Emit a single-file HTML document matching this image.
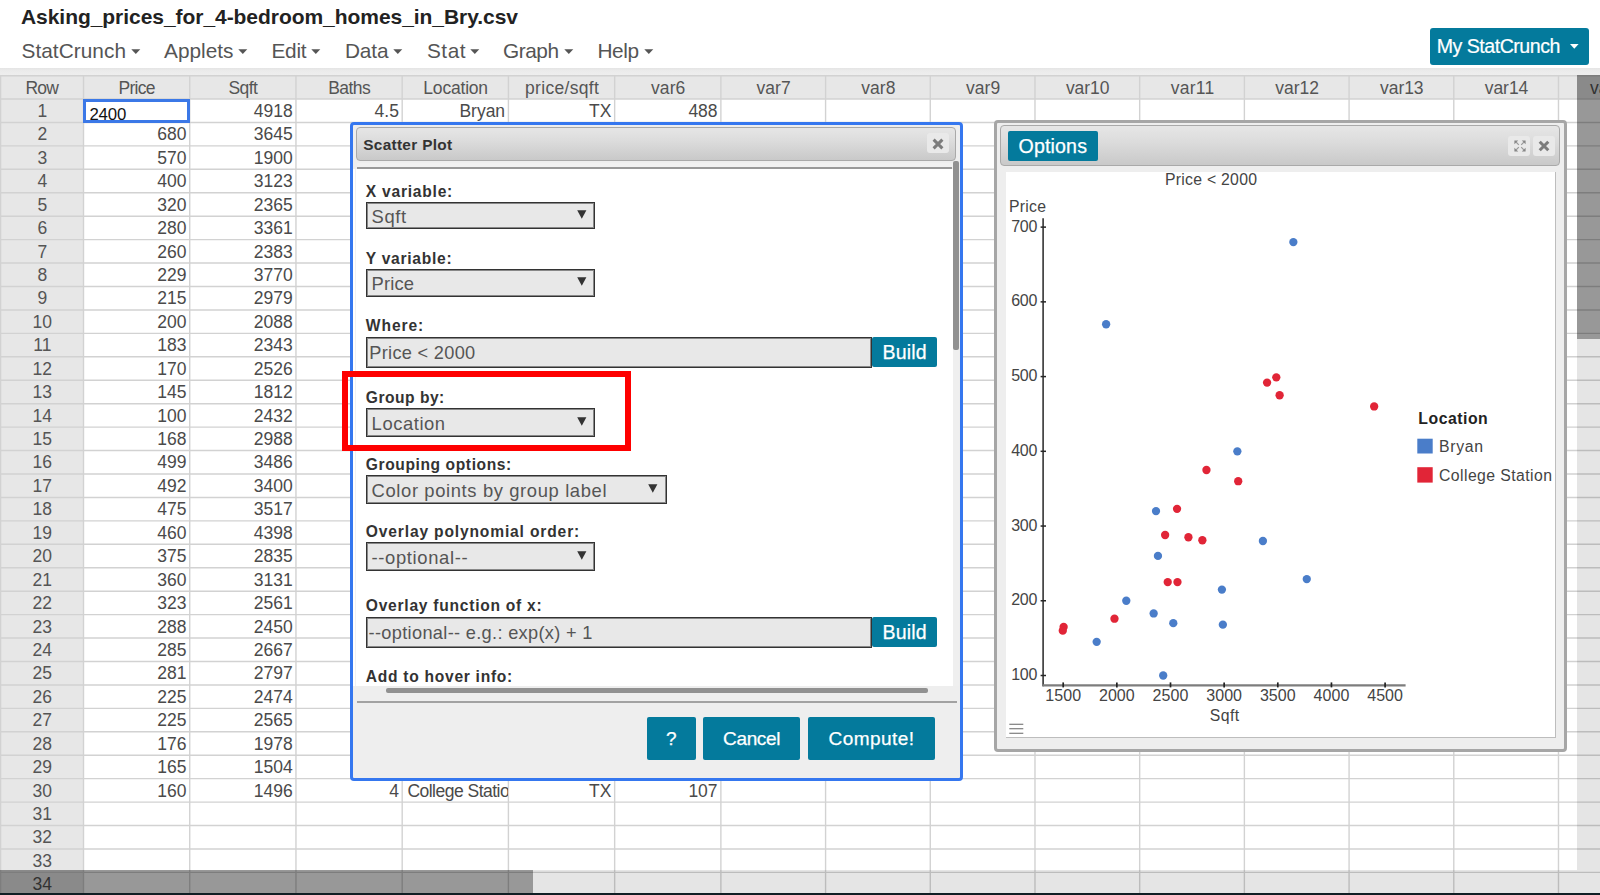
<!DOCTYPE html>
<html><head><meta charset="utf-8"><title>StatCrunch</title><style>
html,body{margin:0;padding:0;overflow:hidden;background:#fff}
body{width:1600px;height:895px;font-family:"Liberation Sans",sans-serif}
#root{position:relative;left:0;top:0;width:1600px;height:895px;overflow:hidden;background:#fff}
div{position:absolute;box-sizing:border-box}
.t{white-space:nowrap;line-height:1}
.a{position:absolute}
svg{position:absolute;overflow:visible}
</style></head><body><div id="root">
<div class="t" style="left:21.00px;top:6px;font-size:21.0px;color:#222;font-weight:bold;letter-spacing:-0.050px;">Asking_prices_for_4-bedroom_homes_in_Bry.csv</div>
<div class="t" style="left:21.50px;top:41px;font-size:20.8px;color:#555;letter-spacing:0.050px;">StatCrunch</div>
<svg class="a" style="left:131.00px;top:49.4px" width="10" height="6" viewBox="0 0 10 6"><path d="M0.3 0.3H9.3L4.8 5z" fill="#555"/></svg>
<div class="t" style="left:164.00px;top:41px;font-size:20.8px;color:#555;letter-spacing:0.022px;">Applets</div>
<svg class="a" style="left:238.00px;top:49.4px" width="10" height="6" viewBox="0 0 10 6"><path d="M0.3 0.3H9.3L4.8 5z" fill="#555"/></svg>
<div class="t" style="left:271.50px;top:41px;font-size:20.8px;color:#555;letter-spacing:-0.276px;">Edit</div>
<svg class="a" style="left:311.00px;top:49.4px" width="10" height="6" viewBox="0 0 10 6"><path d="M0.3 0.3H9.3L4.8 5z" fill="#555"/></svg>
<div class="t" style="left:345.00px;top:41px;font-size:20.8px;color:#555;letter-spacing:-0.147px;">Data</div>
<svg class="a" style="left:393.00px;top:49.4px" width="10" height="6" viewBox="0 0 10 6"><path d="M0.3 0.3H9.3L4.8 5z" fill="#555"/></svg>
<div class="t" style="left:427.00px;top:41px;font-size:20.8px;color:#555;letter-spacing:0.492px;">Stat</div>
<svg class="a" style="left:470.00px;top:49.4px" width="10" height="6" viewBox="0 0 10 6"><path d="M0.3 0.3H9.3L4.8 5z" fill="#555"/></svg>
<div class="t" style="left:503.00px;top:41px;font-size:20.8px;color:#555;letter-spacing:-0.456px;">Graph</div>
<svg class="a" style="left:563.50px;top:49.4px" width="10" height="6" viewBox="0 0 10 6"><path d="M0.3 0.3H9.3L4.8 5z" fill="#555"/></svg>
<div class="t" style="left:597.50px;top:41px;font-size:20.8px;color:#555;letter-spacing:-0.432px;">Help</div>
<svg class="a" style="left:644.00px;top:49.4px" width="10" height="6" viewBox="0 0 10 6"><path d="M0.3 0.3H9.3L4.8 5z" fill="#555"/></svg>
<div style="left:1430.00px;top:28.00px;width:158.50px;height:37.30px;background:#047a9c;border-radius:3px;"></div>
<div class="t" style="left:1436.70px;top:37px;font-size:19.6px;color:#fff;letter-spacing:-0.492px;-webkit-text-stroke:0.2px #fff;">My StatCrunch</div>
<svg class="a" style="left:1569.5px;top:44px" width="9" height="5" viewBox="0 0 9 5"><path d="M0 0H8.6L4.3 4.8z" fill="#fff"/></svg>
<div style="left:0.00px;top:68.40px;width:1600.00px;height:7.40px;background:linear-gradient(#e4e4e4,#ebebeb 35%,#efefef);"></div>
<div style="left:0.00px;top:75.70px;width:1600.00px;height:23.30px;background:#e7e7e7;"></div>
<div style="left:0.00px;top:99.00px;width:83.50px;height:796.00px;background:#e7e7e7;"></div>
<svg class="a" style="left:0;top:0" width="1600" height="895" viewBox="0 0 1600 895"><g stroke="#d2d2d2" stroke-width="1.4" fill="none"><path d="M0.6 75.70V895"/><path d="M83.50 75.70V895"/><path d="M189.73 75.70V895"/><path d="M295.96 75.70V895"/><path d="M402.19 75.70V895"/><path d="M508.42 75.70V895"/><path d="M614.65 75.70V895"/><path d="M720.88 75.70V895"/><path d="M825.58 75.70V895"/><path d="M930.28 75.70V895"/><path d="M1034.98 75.70V895"/><path d="M1139.68 75.70V895"/><path d="M1244.38 75.70V895"/><path d="M1349.08 75.70V895"/><path d="M1453.78 75.70V895"/><path d="M1558.48 75.70V895"/><path d="M0 75.70H1600"/><path d="M0 99.00H1600"/><path d="M0 122.44H1600"/><path d="M0 145.87H1600"/><path d="M0 169.31H1600"/><path d="M0 192.75H1600"/><path d="M0 216.19H1600"/><path d="M0 239.62H1600"/><path d="M0 263.06H1600"/><path d="M0 286.50H1600"/><path d="M0 309.93H1600"/><path d="M0 333.37H1600"/><path d="M0 356.81H1600"/><path d="M0 380.24H1600"/><path d="M0 403.68H1600"/><path d="M0 427.12H1600"/><path d="M0 450.56H1600"/><path d="M0 473.99H1600"/><path d="M0 497.43H1600"/><path d="M0 520.87H1600"/><path d="M0 544.30H1600"/><path d="M0 567.74H1600"/><path d="M0 591.18H1600"/><path d="M0 614.61H1600"/><path d="M0 638.05H1600"/><path d="M0 661.49H1600"/><path d="M0 684.93H1600"/><path d="M0 708.36H1600"/><path d="M0 731.80H1600"/><path d="M0 755.24H1600"/><path d="M0 778.67H1600"/><path d="M0 802.11H1600"/><path d="M0 825.55H1600"/><path d="M0 848.98H1600"/><path d="M0 872.42H1600"/><path d="M0 895.86H1600"/></g></svg>
<div class="t" style="left:25.40px;top:80px;font-size:17.5px;color:#555;letter-spacing:-0.772px;">Row</div>
<div class="t" style="left:118.52px;top:80px;font-size:17.5px;color:#555;letter-spacing:-0.714px;">Price</div>
<div class="t" style="left:228.50px;top:80px;font-size:17.5px;color:#555;letter-spacing:-0.550px;">Sqft</div>
<div class="t" style="left:328.23px;top:80px;font-size:17.5px;color:#555;letter-spacing:-0.564px;">Baths</div>
<div class="t" style="left:423.33px;top:80px;font-size:17.5px;color:#555;letter-spacing:-0.200px;">Location</div>
<div class="t" style="left:525.06px;top:80px;font-size:17.5px;color:#555;letter-spacing:0.305px;">price/sqft</div>
<div class="t" style="left:651.07px;top:80px;font-size:17.5px;color:#555;letter-spacing:0.054px;">var6</div>
<div class="t" style="left:756.53px;top:80px;font-size:17.5px;color:#555;letter-spacing:0.054px;">var7</div>
<div class="t" style="left:861.23px;top:80px;font-size:17.5px;color:#555;letter-spacing:0.054px;">var8</div>
<div class="t" style="left:965.93px;top:80px;font-size:17.5px;color:#555;letter-spacing:0.054px;">var9</div>
<div class="t" style="left:1065.93px;top:80px;font-size:17.5px;color:#555;letter-spacing:-0.048px;">var10</div>
<div class="t" style="left:1170.63px;top:80px;font-size:17.5px;color:#555;letter-spacing:0.280px;">var11</div>
<div class="t" style="left:1275.33px;top:80px;font-size:17.5px;color:#555;letter-spacing:-0.048px;">var12</div>
<div class="t" style="left:1380.03px;top:80px;font-size:17.5px;color:#555;letter-spacing:-0.048px;">var13</div>
<div class="t" style="left:1484.73px;top:80px;font-size:17.5px;color:#555;letter-spacing:-0.048px;">var14</div>
<div class="t" style="left:1590.00px;top:80px;font-size:17.5px;color:#555;letter-spacing:-0.048px;">var15</div>
<div class="t" style="left:37.44px;top:103px;font-size:17.5px;color:#555;">1</div>
<div class="t" style="left:37.44px;top:126px;font-size:17.5px;color:#555;">2</div>
<div class="t" style="left:37.44px;top:150px;font-size:17.5px;color:#555;">3</div>
<div class="t" style="left:37.44px;top:173px;font-size:17.5px;color:#555;">4</div>
<div class="t" style="left:37.44px;top:197px;font-size:17.5px;color:#555;">5</div>
<div class="t" style="left:37.44px;top:220px;font-size:17.5px;color:#555;">6</div>
<div class="t" style="left:37.44px;top:244px;font-size:17.5px;color:#555;">7</div>
<div class="t" style="left:37.44px;top:267px;font-size:17.5px;color:#555;">8</div>
<div class="t" style="left:37.44px;top:290px;font-size:17.5px;color:#555;">9</div>
<div class="t" style="left:32.57px;top:314px;font-size:17.5px;color:#555;">10</div>
<div class="t" style="left:33.22px;top:337px;font-size:17.5px;color:#555;">11</div>
<div class="t" style="left:32.57px;top:361px;font-size:17.5px;color:#555;">12</div>
<div class="t" style="left:32.57px;top:384px;font-size:17.5px;color:#555;">13</div>
<div class="t" style="left:32.57px;top:408px;font-size:17.5px;color:#555;">14</div>
<div class="t" style="left:32.57px;top:431px;font-size:17.5px;color:#555;">15</div>
<div class="t" style="left:32.57px;top:454px;font-size:17.5px;color:#555;">16</div>
<div class="t" style="left:32.57px;top:478px;font-size:17.5px;color:#555;">17</div>
<div class="t" style="left:32.57px;top:501px;font-size:17.5px;color:#555;">18</div>
<div class="t" style="left:32.57px;top:525px;font-size:17.5px;color:#555;">19</div>
<div class="t" style="left:32.57px;top:548px;font-size:17.5px;color:#555;">20</div>
<div class="t" style="left:32.57px;top:572px;font-size:17.5px;color:#555;">21</div>
<div class="t" style="left:32.57px;top:595px;font-size:17.5px;color:#555;">22</div>
<div class="t" style="left:32.57px;top:619px;font-size:17.5px;color:#555;">23</div>
<div class="t" style="left:32.57px;top:642px;font-size:17.5px;color:#555;">24</div>
<div class="t" style="left:32.57px;top:665px;font-size:17.5px;color:#555;">25</div>
<div class="t" style="left:32.57px;top:689px;font-size:17.5px;color:#555;">26</div>
<div class="t" style="left:32.57px;top:712px;font-size:17.5px;color:#555;">27</div>
<div class="t" style="left:32.57px;top:736px;font-size:17.5px;color:#555;">28</div>
<div class="t" style="left:32.57px;top:759px;font-size:17.5px;color:#555;">29</div>
<div class="t" style="left:32.57px;top:783px;font-size:17.5px;color:#555;">30</div>
<div class="t" style="left:32.57px;top:806px;font-size:17.5px;color:#555;">31</div>
<div class="t" style="left:32.57px;top:829px;font-size:17.5px;color:#555;">32</div>
<div class="t" style="left:32.57px;top:853px;font-size:17.5px;color:#555;">33</div>
<div class="t" style="left:32.57px;top:876px;font-size:17.5px;color:#555;">34</div>
<div class="t" style="left:157.23px;top:126px;font-size:17.5px;color:#4a4a4a;">680</div>
<div class="t" style="left:157.23px;top:150px;font-size:17.5px;color:#4a4a4a;">570</div>
<div class="t" style="left:157.23px;top:173px;font-size:17.5px;color:#4a4a4a;">400</div>
<div class="t" style="left:157.23px;top:197px;font-size:17.5px;color:#4a4a4a;">320</div>
<div class="t" style="left:157.23px;top:220px;font-size:17.5px;color:#4a4a4a;">280</div>
<div class="t" style="left:157.23px;top:244px;font-size:17.5px;color:#4a4a4a;">260</div>
<div class="t" style="left:157.23px;top:267px;font-size:17.5px;color:#4a4a4a;">229</div>
<div class="t" style="left:157.23px;top:290px;font-size:17.5px;color:#4a4a4a;">215</div>
<div class="t" style="left:157.23px;top:314px;font-size:17.5px;color:#4a4a4a;">200</div>
<div class="t" style="left:157.23px;top:337px;font-size:17.5px;color:#4a4a4a;">183</div>
<div class="t" style="left:157.23px;top:361px;font-size:17.5px;color:#4a4a4a;">170</div>
<div class="t" style="left:157.23px;top:384px;font-size:17.5px;color:#4a4a4a;">145</div>
<div class="t" style="left:157.23px;top:408px;font-size:17.5px;color:#4a4a4a;">100</div>
<div class="t" style="left:157.23px;top:431px;font-size:17.5px;color:#4a4a4a;">168</div>
<div class="t" style="left:157.23px;top:454px;font-size:17.5px;color:#4a4a4a;">499</div>
<div class="t" style="left:157.23px;top:478px;font-size:17.5px;color:#4a4a4a;">492</div>
<div class="t" style="left:157.23px;top:501px;font-size:17.5px;color:#4a4a4a;">475</div>
<div class="t" style="left:157.23px;top:525px;font-size:17.5px;color:#4a4a4a;">460</div>
<div class="t" style="left:157.23px;top:548px;font-size:17.5px;color:#4a4a4a;">375</div>
<div class="t" style="left:157.23px;top:572px;font-size:17.5px;color:#4a4a4a;">360</div>
<div class="t" style="left:157.23px;top:595px;font-size:17.5px;color:#4a4a4a;">323</div>
<div class="t" style="left:157.23px;top:619px;font-size:17.5px;color:#4a4a4a;">288</div>
<div class="t" style="left:157.23px;top:642px;font-size:17.5px;color:#4a4a4a;">285</div>
<div class="t" style="left:157.23px;top:665px;font-size:17.5px;color:#4a4a4a;">281</div>
<div class="t" style="left:157.23px;top:689px;font-size:17.5px;color:#4a4a4a;">225</div>
<div class="t" style="left:157.23px;top:712px;font-size:17.5px;color:#4a4a4a;">225</div>
<div class="t" style="left:157.23px;top:736px;font-size:17.5px;color:#4a4a4a;">176</div>
<div class="t" style="left:157.23px;top:759px;font-size:17.5px;color:#4a4a4a;">165</div>
<div class="t" style="left:157.23px;top:783px;font-size:17.5px;color:#4a4a4a;">160</div>
<div class="t" style="left:253.73px;top:103px;font-size:17.5px;color:#4a4a4a;">4918</div>
<div class="t" style="left:253.73px;top:126px;font-size:17.5px;color:#4a4a4a;">3645</div>
<div class="t" style="left:253.73px;top:150px;font-size:17.5px;color:#4a4a4a;">1900</div>
<div class="t" style="left:253.73px;top:173px;font-size:17.5px;color:#4a4a4a;">3123</div>
<div class="t" style="left:253.73px;top:197px;font-size:17.5px;color:#4a4a4a;">2365</div>
<div class="t" style="left:253.73px;top:220px;font-size:17.5px;color:#4a4a4a;">3361</div>
<div class="t" style="left:253.73px;top:244px;font-size:17.5px;color:#4a4a4a;">2383</div>
<div class="t" style="left:253.73px;top:267px;font-size:17.5px;color:#4a4a4a;">3770</div>
<div class="t" style="left:253.73px;top:290px;font-size:17.5px;color:#4a4a4a;">2979</div>
<div class="t" style="left:253.73px;top:314px;font-size:17.5px;color:#4a4a4a;">2088</div>
<div class="t" style="left:253.73px;top:337px;font-size:17.5px;color:#4a4a4a;">2343</div>
<div class="t" style="left:253.73px;top:361px;font-size:17.5px;color:#4a4a4a;">2526</div>
<div class="t" style="left:253.73px;top:384px;font-size:17.5px;color:#4a4a4a;">1812</div>
<div class="t" style="left:253.73px;top:408px;font-size:17.5px;color:#4a4a4a;">2432</div>
<div class="t" style="left:253.73px;top:431px;font-size:17.5px;color:#4a4a4a;">2988</div>
<div class="t" style="left:253.73px;top:454px;font-size:17.5px;color:#4a4a4a;">3486</div>
<div class="t" style="left:253.73px;top:478px;font-size:17.5px;color:#4a4a4a;">3400</div>
<div class="t" style="left:253.73px;top:501px;font-size:17.5px;color:#4a4a4a;">3517</div>
<div class="t" style="left:253.73px;top:525px;font-size:17.5px;color:#4a4a4a;">4398</div>
<div class="t" style="left:253.73px;top:548px;font-size:17.5px;color:#4a4a4a;">2835</div>
<div class="t" style="left:253.73px;top:572px;font-size:17.5px;color:#4a4a4a;">3131</div>
<div class="t" style="left:253.73px;top:595px;font-size:17.5px;color:#4a4a4a;">2561</div>
<div class="t" style="left:253.73px;top:619px;font-size:17.5px;color:#4a4a4a;">2450</div>
<div class="t" style="left:253.73px;top:642px;font-size:17.5px;color:#4a4a4a;">2667</div>
<div class="t" style="left:253.73px;top:665px;font-size:17.5px;color:#4a4a4a;">2797</div>
<div class="t" style="left:253.73px;top:689px;font-size:17.5px;color:#4a4a4a;">2474</div>
<div class="t" style="left:253.73px;top:712px;font-size:17.5px;color:#4a4a4a;">2565</div>
<div class="t" style="left:253.73px;top:736px;font-size:17.5px;color:#4a4a4a;">1978</div>
<div class="t" style="left:253.73px;top:759px;font-size:17.5px;color:#4a4a4a;">1504</div>
<div class="t" style="left:253.73px;top:783px;font-size:17.5px;color:#4a4a4a;">1496</div>
<div class="t" style="left:374.56px;top:103px;font-size:17.5px;color:#4a4a4a;">4.5</div>
<div class="t" style="left:459.40px;top:103px;font-size:17.5px;color:#4a4a4a;">Bryan</div>
<div class="t" style="left:588.99px;top:103px;font-size:17.5px;color:#4a4a4a;">TX</div>
<div class="t" style="left:688.38px;top:103px;font-size:17.5px;color:#4a4a4a;">488</div>
<div class="t" style="left:389.16px;top:783px;font-size:17.5px;color:#4a4a4a;">4</div>
<div class="t" style="left:588.99px;top:783px;font-size:17.5px;color:#4a4a4a;">TX</div>
<div class="t" style="left:688.38px;top:783px;font-size:17.5px;color:#4a4a4a;">107</div>
<div class="a" style="left:402.69px;top:779.00px;width:105.43px;height:22.00px;overflow:hidden;"><div class="t" style="left:4.71px;top:4px;font-size:17.5px;color:#4a4a4a;letter-spacing:-0.510px">College Station</div></div>
<div class="a" style="left:83.00px;top:99.00px;width:107.00px;height:24.00px;background:#fff;border:3px solid #3b78e7;box-sizing:border-box;"></div>
<div class="t" style="left:89.40px;top:107px;font-size:16.8px;color:#111;letter-spacing:-0.160px;">2400</div>
<div style="left:1577.00px;top:75.30px;width:23.00px;height:794.70px;background:rgba(0,0,0,0.1);"></div>
<div style="left:1577.00px;top:75.30px;width:23.00px;height:263.60px;background:rgba(0,0,0,0.335);"></div>
<div style="left:0.00px;top:870.00px;width:1600.00px;height:23.30px;background:rgba(0,0,0,0.1);"></div>
<div style="left:0.00px;top:870.00px;width:533.00px;height:23.30px;background:rgba(0,0,0,0.335);"></div>
<div style="left:0.00px;top:893.00px;width:1600.00px;height:2.00px;background:#101e24;"></div>
<div style="left:350.00px;top:122.00px;width:612.50px;height:659.00px;background:#eeeeee;border:3px solid #3577ef;border-radius:4px;box-sizing:border-box;"></div>
<div style="left:356.00px;top:127.00px;width:599.60px;height:33.60px;background:linear-gradient(#e6e6e6,#dcdcdc 40%,#c9c9c9);border:1px solid #a9a9a9;border-radius:4px;box-sizing:border-box;"></div>
<div class="t" style="left:363.20px;top:137px;font-size:15.4px;color:#333;font-weight:bold;letter-spacing:0.310px;">Scatter Plot</div>
<div style="left:926.50px;top:133.00px;width:22.00px;height:20.30px;background:#e9e9e9;border-radius:3px;"></div>
<svg class="a" style="left:931.6px;top:138.4px" width="12" height="12" viewBox="0 0 12 12"><path d="M1.6 1.6L10.4 10.4M10.4 1.6L1.6 10.4" stroke="#7c7c7c" stroke-width="3"/></svg>
<div style="left:356.50px;top:162.50px;width:596.00px;height:5.00px;background:#f1f1f1;"></div>
<div style="left:356.50px;top:167.20px;width:595.00px;height:1.40px;background:#999;"></div>
<div style="left:353.00px;top:168.50px;width:599.60px;height:517.50px;background:#fff;"></div>
<div style="left:355.00px;top:168.50px;width:1.00px;height:517.50px;background:#f1f1f1;"></div>
<div style="left:953.00px;top:161.00px;width:6.00px;height:525.00px;background:#efefef;"></div>
<div style="left:953.00px;top:161.00px;width:6.00px;height:188.60px;background:#919191;border-radius:2px;"></div>
<div style="left:356.50px;top:686.00px;width:602.00px;height:10.00px;background:#eeeeee;"></div>
<div style="left:385.60px;top:687.80px;width:542.60px;height:5.40px;background:#919191;border-radius:2px;"></div>
<div style="left:356.50px;top:701.30px;width:600.20px;height:1.40px;background:#a2a2a2;"></div>
<div class="t" style="left:365.80px;top:184px;font-size:15.6px;color:#333;font-weight:bold;letter-spacing:0.760px;">X variable:</div>
<div style="left:365.50px;top:201.70px;width:229.80px;height:27.80px;background:#e8e8e8;border:1px solid #333;box-shadow:inset 0 0 0 1px rgba(40,40,40,0.5);box-sizing:border-box;"></div>
<div class="t" style="left:371.60px;top:208px;font-size:18.4px;color:#555;letter-spacing:0.583px;">Sqft</div>
<svg class="a" style="left:576.70px;top:209.90px" width="10" height="9" viewBox="0 0 10 9"><path d="M0.2 0.2H9.4L4.8 8.7z" fill="#333"/></svg>
<div class="t" style="left:365.80px;top:251px;font-size:15.6px;color:#333;font-weight:bold;letter-spacing:0.718px;">Y variable:</div>
<div style="left:365.50px;top:268.80px;width:229.80px;height:28.00px;background:#e8e8e8;border:1px solid #333;box-shadow:inset 0 0 0 1px rgba(40,40,40,0.5);box-sizing:border-box;"></div>
<div class="t" style="left:371.60px;top:275px;font-size:18.4px;color:#555;letter-spacing:0.149px;">Price</div>
<svg class="a" style="left:576.70px;top:277.10px" width="10" height="9" viewBox="0 0 10 9"><path d="M0.2 0.2H9.4L4.8 8.7z" fill="#333"/></svg>
<div class="t" style="left:365.80px;top:318px;font-size:15.6px;color:#333;font-weight:bold;letter-spacing:0.923px;">Where:</div>
<div style="left:365.50px;top:337.00px;width:506.50px;height:31.00px;background:#e8e8e8;border:1px solid #333;box-shadow:inset 0 0 0 1px rgba(40,40,40,0.5);box-sizing:border-box;"></div>
<div class="t" style="left:369.30px;top:344px;font-size:18.2px;color:#555;letter-spacing:0.301px;">Price &lt; 2000</div>
<div style="left:872.30px;top:337.00px;width:64.80px;height:30.00px;background:#047a9c;border-radius:2px;"></div>
<div class="t" style="left:882.60px;top:343px;font-size:19.5px;color:#fff;letter-spacing:0.165px;-webkit-text-stroke:0.25px #fff;">Build</div>
<div class="t" style="left:365.80px;top:390px;font-size:15.6px;color:#333;font-weight:bold;letter-spacing:0.496px;">Group by:</div>
<div style="left:365.50px;top:408.30px;width:229.80px;height:28.60px;background:#e8e8e8;border:1px solid #333;box-shadow:inset 0 0 0 1px rgba(40,40,40,0.5);box-sizing:border-box;"></div>
<div class="t" style="left:371.60px;top:415px;font-size:18.4px;color:#555;letter-spacing:0.564px;">Location</div>
<svg class="a" style="left:576.70px;top:416.90px" width="10" height="9" viewBox="0 0 10 9"><path d="M0.2 0.2H9.4L4.8 8.7z" fill="#333"/></svg>
<div class="t" style="left:365.80px;top:457px;font-size:15.6px;color:#333;font-weight:bold;letter-spacing:0.592px;">Grouping options:</div>
<div style="left:365.50px;top:475.20px;width:301.30px;height:28.60px;background:#e8e8e8;border:1px solid #333;box-shadow:inset 0 0 0 1px rgba(40,40,40,0.5);box-sizing:border-box;"></div>
<div class="t" style="left:371.60px;top:482px;font-size:18.4px;color:#555;letter-spacing:0.619px;">Color points by group label</div>
<svg class="a" style="left:648.20px;top:483.80px" width="10" height="9" viewBox="0 0 10 9"><path d="M0.2 0.2H9.4L4.8 8.7z" fill="#333"/></svg>
<div class="t" style="left:365.80px;top:524px;font-size:15.6px;color:#333;font-weight:bold;letter-spacing:0.841px;">Overlay polynomial order:</div>
<div style="left:365.50px;top:542.40px;width:229.80px;height:28.60px;background:#e8e8e8;border:1px solid #333;box-shadow:inset 0 0 0 1px rgba(40,40,40,0.5);box-sizing:border-box;"></div>
<div class="t" style="left:371.60px;top:549px;font-size:18.4px;color:#555;letter-spacing:0.640px;">--optional--</div>
<svg class="a" style="left:576.70px;top:551.00px" width="10" height="9" viewBox="0 0 10 9"><path d="M0.2 0.2H9.4L4.8 8.7z" fill="#333"/></svg>
<div class="t" style="left:365.80px;top:598px;font-size:15.6px;color:#333;font-weight:bold;letter-spacing:0.744px;">Overlay function of x:</div>
<div style="left:365.50px;top:617.00px;width:506.50px;height:30.50px;background:#e8e8e8;border:1px solid #333;box-shadow:inset 0 0 0 1px rgba(40,40,40,0.5);box-sizing:border-box;"></div>
<div class="t" style="left:368.60px;top:624px;font-size:18.2px;color:#555;letter-spacing:0.323px;">--optional-- e.g.: exp(x) + 1</div>
<div style="left:872.30px;top:617.00px;width:64.80px;height:29.60px;background:#047a9c;border-radius:2px;"></div>
<div class="t" style="left:882.60px;top:623px;font-size:19.5px;color:#fff;letter-spacing:0.165px;-webkit-text-stroke:0.25px #fff;">Build</div>
<div class="a" style="left:356.00px;top:660.00px;width:596.00px;height:26.00px;overflow:hidden;"><div class="t" style="left:9.80px;top:9px;font-size:15.6px;font-weight:bold;color:#333;letter-spacing:0.717px">Add to hover info:</div></div>
<div style="left:342.00px;top:371.00px;width:289.00px;height:80.00px;border:6px solid #fe0000;box-sizing:border-box;"></div>
<div style="left:647.00px;top:717.00px;width:48.50px;height:43.20px;background:#047a9c;border-radius:2px;"></div>
<div class="t" style="left:665.98px;top:729px;font-size:19.0px;color:#fff;-webkit-text-stroke:0.25px #fff;">?</div>
<div style="left:703.30px;top:717.00px;width:96.90px;height:43.20px;background:#047a9c;border-radius:2px;"></div>
<div class="t" style="left:723.00px;top:729px;font-size:19.0px;color:#fff;letter-spacing:-0.328px;-webkit-text-stroke:0.25px #fff;">Cancel</div>
<div style="left:808.00px;top:717.00px;width:126.60px;height:43.20px;background:#047a9c;border-radius:2px;"></div>
<div class="t" style="left:828.55px;top:729px;font-size:19.0px;color:#fff;letter-spacing:0.448px;-webkit-text-stroke:0.25px #fff;">Compute!</div>
<div style="left:994.40px;top:120.00px;width:572.20px;height:631.60px;background:#eeeeee;border:3.2px solid #a6a6a6;border-radius:4px;box-sizing:border-box;"></div>
<div style="left:1000.00px;top:125.00px;width:560.00px;height:41.40px;background:linear-gradient(#e6e6e6,#dcdcdc 40%,#c9c9c9);border:1px solid #a9a9a9;border-radius:4px;box-sizing:border-box;"></div>
<div style="left:1008.00px;top:131.20px;width:90.30px;height:29.80px;background:#047a9c;border-radius:2px;"></div>
<div class="t" style="left:1018.60px;top:137px;font-size:19.6px;color:#fff;letter-spacing:0.138px;-webkit-text-stroke:0.25px #fff;">Options</div>
<div style="left:1507.60px;top:136.00px;width:22.00px;height:20.20px;background:#e9e9e9;border-radius:3px;"></div>
<div style="left:1533.00px;top:136.00px;width:22.00px;height:20.20px;background:#e9e9e9;border-radius:3px;"></div>
<svg class="a" style="left:1538.3px;top:140px" width="12" height="12" viewBox="0 0 12 12"><path d="M1.7 1.7L10.3 10.3M10.3 1.7L1.7 10.3" stroke="#7c7c7c" stroke-width="3"/></svg>
<svg class="a" style="left:1513.6px;top:140.3px" width="12" height="12" viewBox="0 0 12 12"><g fill="#858585"><path d="M0.4 0.4H4.2L0.4 4.2zM11.6 0.4V4.2L7.8 0.4zM11.6 11.6H7.8L11.6 7.8zM0.4 11.6V7.8L4.2 11.6z"/></g><path d="M2 2L4.8 4.8M10 2L7.2 4.8M10 10L7.2 7.2M2 10L4.8 7.2" stroke="#9a9a9a" stroke-width="1.1"/></svg>
<div style="left:1006.00px;top:171.60px;width:550.00px;height:566.60px;background:#fff;border-right:1.3px solid #bdbdbd;border-bottom:1.3px solid #bdbdbd;box-sizing:border-box;"></div>
<svg class="a" style="left:0;top:0" width="1600" height="895" viewBox="0 0 1600 895"><g stroke="#262626" stroke-width="1.5" fill="none"><path d="M1043.1 218.3V686.2"/><path d="M1042.4 685.4H1405.6" stroke="#7d7d7d" stroke-width="2.3"/><path d="M1040.6 675.50H1046"/><path d="M1040.6 600.77H1046"/><path d="M1040.6 526.04H1046"/><path d="M1040.6 451.31H1046"/><path d="M1040.6 376.58H1046"/><path d="M1040.6 301.85H1046"/><path d="M1040.6 227.12H1046"/><path d="M1063.20 682.4V687.4" stroke="#222" stroke-width="1.7"/><path d="M1116.85 682.4V687.4" stroke="#222" stroke-width="1.7"/><path d="M1170.50 682.4V687.4" stroke="#222" stroke-width="1.7"/><path d="M1224.15 682.4V687.4" stroke="#222" stroke-width="1.7"/><path d="M1277.80 682.4V687.4" stroke="#222" stroke-width="1.7"/><path d="M1331.45 682.4V687.4" stroke="#222" stroke-width="1.7"/><path d="M1385.10 682.4V687.4" stroke="#222" stroke-width="1.7"/></g><circle cx="1293.36" cy="242.07" r="4.15" fill="#4a7dc9"/><circle cx="1106.12" cy="324.27" r="4.15" fill="#4a7dc9"/><circle cx="1237.35" cy="451.31" r="4.15" fill="#4a7dc9"/><circle cx="1156.01" cy="511.09" r="4.15" fill="#4a7dc9"/><circle cx="1262.89" cy="540.99" r="4.15" fill="#4a7dc9"/><circle cx="1157.95" cy="555.93" r="4.15" fill="#4a7dc9"/><circle cx="1306.77" cy="579.10" r="4.15" fill="#4a7dc9"/><circle cx="1221.90" cy="589.56" r="4.15" fill="#4a7dc9"/><circle cx="1126.29" cy="600.77" r="4.15" fill="#4a7dc9"/><circle cx="1153.65" cy="613.47" r="4.15" fill="#4a7dc9"/><circle cx="1173.29" cy="623.19" r="4.15" fill="#4a7dc9"/><circle cx="1096.68" cy="641.87" r="4.15" fill="#4a7dc9"/><circle cx="1163.20" cy="675.50" r="4.15" fill="#4a7dc9"/><circle cx="1222.86" cy="624.68" r="4.15" fill="#4a7dc9"/><circle cx="1276.30" cy="377.33" r="4.15" fill="#e12537"/><circle cx="1267.07" cy="382.56" r="4.15" fill="#e12537"/><circle cx="1279.62" cy="395.26" r="4.15" fill="#e12537"/><circle cx="1374.16" cy="406.47" r="4.15" fill="#e12537"/><circle cx="1206.45" cy="469.99" r="4.15" fill="#e12537"/><circle cx="1238.21" cy="481.20" r="4.15" fill="#e12537"/><circle cx="1177.05" cy="508.85" r="4.15" fill="#e12537"/><circle cx="1165.13" cy="535.01" r="4.15" fill="#e12537"/><circle cx="1188.42" cy="537.25" r="4.15" fill="#e12537"/><circle cx="1202.37" cy="540.24" r="4.15" fill="#e12537"/><circle cx="1167.71" cy="582.09" r="4.15" fill="#e12537"/><circle cx="1177.47" cy="582.09" r="4.15" fill="#e12537"/><circle cx="1114.49" cy="618.71" r="4.15" fill="#e12537"/><circle cx="1063.63" cy="626.93" r="4.15" fill="#e12537"/><circle cx="1062.77" cy="630.66" r="4.15" fill="#e12537"/><path d="M1009.3 724.2H1023.3M1009.3 728.7H1023.3M1009.3 733.2H1023.3" stroke="#666" stroke-width="1.1"/><rect x="1417.3" y="438.7" width="15.4" height="14.8" fill="#4a7dc9"/><rect x="1417.3" y="467.2" width="15.4" height="15.4" fill="#e12537"/></svg>
<div class="t" style="left:1165.00px;top:172px;font-size:15.8px;color:#444;letter-spacing:0.259px;">Price &lt; 2000</div>
<div class="t" style="left:1009.00px;top:199px;font-size:15.8px;color:#444;letter-spacing:0.254px;">Price</div>
<div class="t" style="left:1011.20px;top:667px;font-size:16.0px;color:#444;letter-spacing:-0.240px;">100</div>
<div class="t" style="left:1011.20px;top:592px;font-size:16.0px;color:#444;letter-spacing:-0.240px;">200</div>
<div class="t" style="left:1011.20px;top:518px;font-size:16.0px;color:#444;letter-spacing:-0.240px;">300</div>
<div class="t" style="left:1011.20px;top:443px;font-size:16.0px;color:#444;letter-spacing:-0.240px;">400</div>
<div class="t" style="left:1011.20px;top:368px;font-size:16.0px;color:#444;letter-spacing:-0.240px;">500</div>
<div class="t" style="left:1011.20px;top:293px;font-size:16.0px;color:#444;letter-spacing:-0.240px;">600</div>
<div class="t" style="left:1011.20px;top:219px;font-size:16.0px;color:#444;letter-spacing:-0.240px;">700</div>
<div class="t" style="left:1045.33px;top:688px;font-size:16.0px;color:#444;letter-spacing:0.050px;">1500</div>
<div class="t" style="left:1098.98px;top:688px;font-size:16.0px;color:#444;letter-spacing:0.050px;">2000</div>
<div class="t" style="left:1152.62px;top:688px;font-size:16.0px;color:#444;letter-spacing:0.050px;">2500</div>
<div class="t" style="left:1206.28px;top:688px;font-size:16.0px;color:#444;letter-spacing:0.050px;">3000</div>
<div class="t" style="left:1259.93px;top:688px;font-size:16.0px;color:#444;letter-spacing:0.050px;">3500</div>
<div class="t" style="left:1313.58px;top:688px;font-size:16.0px;color:#444;letter-spacing:0.050px;">4000</div>
<div class="t" style="left:1367.23px;top:688px;font-size:16.0px;color:#444;letter-spacing:0.050px;">4500</div>
<div class="t" style="left:1209.75px;top:708px;font-size:15.8px;color:#444;letter-spacing:0.459px;">Sqft</div>
<div class="t" style="left:1418.30px;top:411px;font-size:15.8px;color:#222;font-weight:bold;letter-spacing:0.522px;">Location</div>
<div class="t" style="left:1439.00px;top:439px;font-size:15.8px;color:#444;letter-spacing:0.681px;">Bryan</div>
<div class="t" style="left:1439.00px;top:468px;font-size:15.8px;color:#444;letter-spacing:0.417px;">College Station</div>
</div></body></html>
